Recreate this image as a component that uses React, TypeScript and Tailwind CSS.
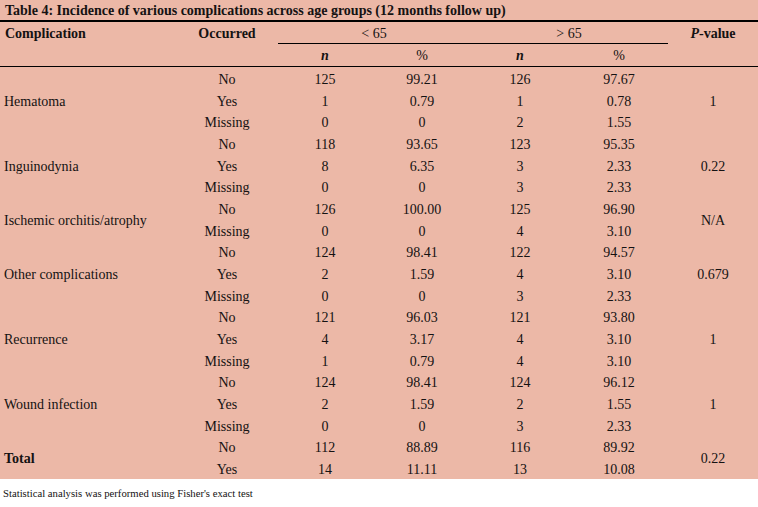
const groups = [
  {
    name: "Hematoma",
    p: "1",
    rows: [
      ["No", "125", "99.21", "126", "97.67"],
      ["Yes", "1", "0.79", "1", "0.78"],
      ["Missing", "0", "0", "2", "1.55"],
    ],
  },
  {
    name: "Inguinodynia",
    p: "0.22",
    rows: [
      ["No", "118", "93.65", "123", "95.35"],
      ["Yes", "8", "6.35", "3", "2.33"],
      ["Missing", "0", "0", "3", "2.33"],
    ],
  },
  {
    name: "Ischemic orchitis/atrophy",
    p: "N/A",
    rows: [
      ["No", "126", "100.00", "125", "96.90"],
      ["Missing", "0", "0", "4", "3.10"],
    ],
  },
  {
    name: "Other complications",
    p: "0.679",
    rows: [
      ["No", "124", "98.41", "122", "94.57"],
      ["Yes", "2", "1.59", "4", "3.10"],
      ["Missing", "0", "0", "3", "2.33"],
    ],
  },
  {
    name: "Recurrence",
    p: "1",
    rows: [
      ["No", "121", "96.03", "121", "93.80"],
      ["Yes", "4", "3.17", "4", "3.10"],
      ["Missing", "1", "0.79", "4", "3.10"],
    ],
  },
  {
    name: "Wound infection",
    p: "1",
    rows: [
      ["No", "124", "98.41", "124", "96.12"],
      ["Yes", "2", "1.59", "2", "1.55"],
      ["Missing", "0", "0", "3", "2.33"],
    ],
  },
  {
    name: "Total",
    p: "0.22",
    bold: true,
    rows: [
      ["No", "112", "88.89", "116", "89.92"],
      ["Yes", "14", "11.11", "13", "10.08"],
    ],
  },
];

const spans: Record<number, string> = { 2: "row-span-2", 3: "row-span-3" };
const cols = "grid grid-cols-[178px_98px_98px_96px_100px_98px_90px]";

export default function App() {
  return (
    <div className="h-[507px] w-[758px] bg-white font-['Liberation_Serif',serif] text-[#141212]">
      <div className="bg-[#ecb8a7]">
        <div className="h-[20px] px-[5px] text-[14px] font-bold leading-[21px]">
          Table 4: Incidence of various complications across age groups (12 months follow up)
        </div>
        <div className="h-[2px] bg-black" />

        <div className={`${cols} grid-rows-[22px_22px] border-b border-black text-[14px]`}>
          <div className="flex items-center px-[5px] pt-[1px] font-bold">Complication</div>
          <div className="flex items-center justify-center pt-[1px] font-bold">Occurred</div>
          <div className="col-span-2 ml-[2px] flex items-center justify-center border-b border-black pt-[1px]">
            &lt; 65
          </div>
          <div className="col-span-2 flex items-center justify-center border-b border-black pt-[1px]">&gt; 65</div>
          <div className="flex items-center justify-center pt-[1px] font-bold">
            <i>P</i>-value
          </div>
          <div className="col-span-2" />
          <div className="flex items-center justify-center pt-[1px] font-bold italic">n</div>
          <div className="flex items-center justify-center pt-[1px]">%</div>
          <div className="flex items-center justify-center pt-[1px] font-bold italic">n</div>
          <div className="flex items-center justify-center pt-[1px]">%</div>
          <div />
        </div>

        <div className={`${cols} h-[412px] grid-rows-[repeat(19,minmax(0,1fr))] text-[14px]`}>
          {groups.map((g) => (
            <>
              <div
                key={g.name}
                className={`${spans[g.rows.length]} flex items-center px-[4px] pt-[3px] ${g.bold ? "font-bold" : ""}`}
              >
                {g.name}
              </div>
              {g.rows.map((r, i) => (
                <>
                  {r.map((c, j) => (
                    <div key={`${g.name}-${i}-${j}`} className="flex items-center justify-center pt-[3px]">
                      {c}
                    </div>
                  ))}
                  {i === 0 && (
                    <div className={`${spans[g.rows.length]} flex items-center justify-center pt-[3px]`}>{g.p}</div>
                  )}
                </>
              ))}
            </>
          ))}
        </div>
      </div>
      <div className="px-[3px] text-[10.7px] leading-[29px]">
        Statistical analysis was performed using Fisher's exact test
      </div>
    </div>
  );
}
